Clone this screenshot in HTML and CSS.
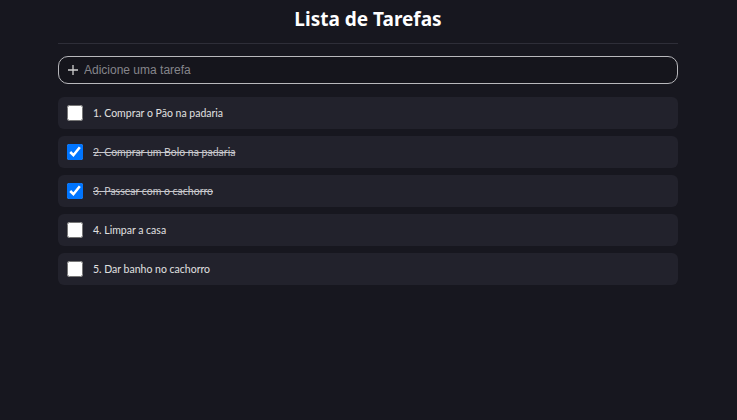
FILE: index.html
```html
<!DOCTYPE html>
<html lang="pt">
<head>
<meta charset="utf-8">
<title>Lista de Tarefas</title>
<link rel="stylesheet" href="styles.css">
</head>
<body>
<main class="app">
  <h1 class="title">Lista de Tarefas</h1>
  <hr class="divider">
  <label class="add">
    <svg class="plus" width="12" height="12" viewBox="0 0 12 12"><path d="M6 1v10M1 6h10" stroke="#cfcfcf" stroke-width="1.3" fill="none"/></svg>
    <input class="add-input" type="text" placeholder="Adicione uma tarefa">
  </label>
  <ul class="list">
    <li class="item"><input class="check" type="checkbox"><span class="text">1. Comprar o Pão na padaria</span></li>
    <li class="item done"><input class="check" type="checkbox" checked><span class="text">2. Comprar um Bolo na padaria</span></li>
    <li class="item done"><input class="check" type="checkbox" checked><span class="text">3. Passear com o cachorro</span></li>
    <li class="item"><input class="check" type="checkbox"><span class="text">4. Limpar a casa</span></li>
    <li class="item"><input class="check" type="checkbox"><span class="text">5. Dar banho no cachorro</span></li>
  </ul>
</main>
</body>
</html>
```
FILE: styles.css
```css
html, body {
  margin: 0;
  padding: 0;
  background: #17171f;
  color: #e6e6e6;
  font-family: "Noto Sans", "Open Sans", sans-serif;
}
.app {
  width: 620px;
  margin: 0 59px 0 58px;
  padding-top: 5px;
}
.title {
  margin: 0;
  text-align: center;
  font-size: 19px;
  font-weight: 700;
  color: #ffffff;
  line-height: 28px;
}
.divider {
  border: 0;
  border-top: 1px solid #2e2e38;
  margin: 10px 0 12px;
}
.add {
  display: flex;
  align-items: center;
  gap: 5px;
  height: 26px;
  border: 1px solid #b8b8bc;
  border-radius: 10px;
  padding: 0 8px;
  background: #15151c;
}
.plus { flex: none; }
.add-input {
  flex: 1;
  border: 0;
  background: transparent;
  outline: none;
  color: #ddd;
  font-family: "Liberation Sans", Arial, sans-serif;
  font-size: 12px;
  padding: 0;
}
.add-input::placeholder { color: #85858b; }
.list {
  list-style: none;
  margin: 13px 0 0;
  padding: 0;
  display: flex;
  flex-direction: column;
  gap: 7px;
}
.item {
  display: flex;
  align-items: center;
  height: 32px;
  background: #22222c;
  border-radius: 6px;
  padding: 0 9px;
}
.check {
  width: 16px;
  height: 16px;
  margin: 0 10px 0 0;
  accent-color: #0075ff;
}
.text {
  font-family: "Lato", "Noto Sans", sans-serif;
  font-size: 10.5px;
  color: #e0e0e0;
}
.done .text {
  text-decoration: line-through;
  color: #c8c8cc;
}
```
